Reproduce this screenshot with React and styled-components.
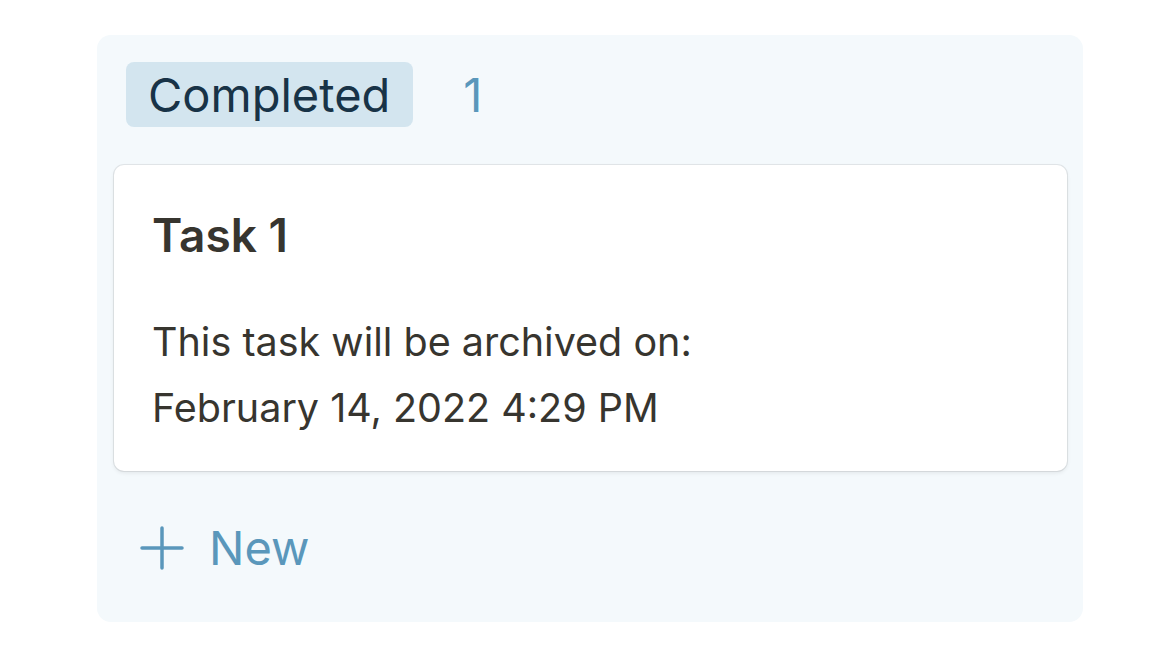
import React from "react";
import styled, { createGlobalStyle } from "styled-components";

const Global = createGlobalStyle`
  html, body { margin: 0; padding: 0; background: #ffffff; }
  body { font-family: Inter, "Noto Sans", sans-serif; -webkit-font-smoothing: antialiased; }
`;

const Page = styled.div`
  width: 1170px;
  height: 658px;
  padding: 35px 87px 36px 97px;
  box-sizing: border-box;
`;

const Column = styled.section`
  height: 100%;
  background: #f4f9fc;
  border-radius: 14px;
  padding: 27px 16px 0 17px;
  box-sizing: border-box;
  display: flex;
  flex-direction: column;
`;

const Header = styled.div`
  display: flex;
  align-items: center;
  gap: 50px;
  padding-left: 12px;
  height: 65px;
`;

const Badge = styled.span`
  display: inline-flex;
  align-items: center;
  height: 65px;
  padding: 0 23px 0 22px;
  border-radius: 8px;
  background: #d3e5ef;
  color: #183347;
  font-size: 47px;
  line-height: 1;
`;

const Count = styled.span`
  color: #5a97bb;
  font-size: 47px;
  line-height: 1;
`;

const Card = styled.article`
  margin-top: 38px;
  background: #ffffff;
  border-radius: 10px;
  box-shadow: 0 0 0 1px rgba(15, 15, 15, 0.08), 0 2px 4px rgba(15, 15, 15, 0.08);
  padding: 30px 38px 30px 38px;
  color: #37352f;
`;

const Title = styled.h2`
  margin: 0;
  font-size: 46px;
  font-weight: 600;
  line-height: 80px;
`;

const Body = styled.p`
  margin: 34px 0 0;
  font-size: 39.5px;
  line-height: 66px;
`;

const NewButton = styled.button`
  display: flex;
  align-items: center;
  gap: 24px;
  margin-top: 53px;
  margin-left: 25px;
  padding: 0;
  border: none;
  background: none;
  color: #5a97bb;
  font-family: inherit;
  font-size: 47px;
  line-height: 1;
  cursor: pointer;
`;

const PlusIcon = () => (
  <svg width="46" height="46" viewBox="0 0 46 46" fill="none" stroke="currentColor" strokeWidth="3.5" strokeLinecap="round">
    <path d="M23 3v40M3 23h40" />
  </svg>
);

export default function App() {
  return (
    <>
      <Global />
      <Page>
        <Column>
          <Header>
            <Badge>Completed</Badge>
            <Count>1</Count>
          </Header>
          <Card>
            <Title>Task 1</Title>
            <Body>
              This task will be archived on:
              <br />
              February 14, 2022 4:29 PM
            </Body>
          </Card>
          <NewButton>
            <PlusIcon />
            New
          </NewButton>
        </Column>
      </Page>
    </>
  );
}
